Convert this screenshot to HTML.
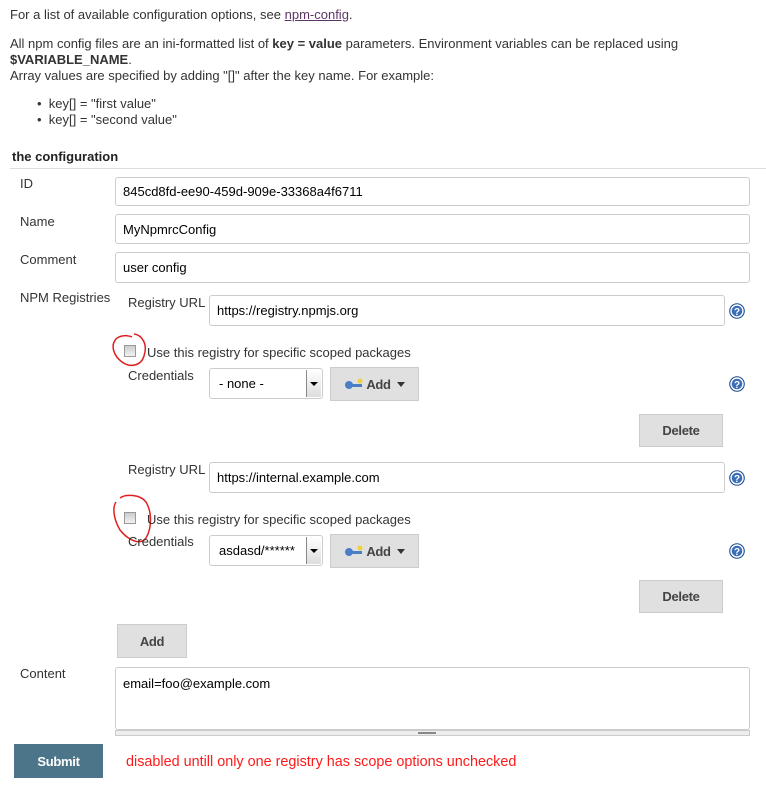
<!DOCTYPE html>
<html><head><style>
body{margin:0;width:766px;height:788px;background:#fff;font-family:"Liberation Sans",Arial,sans-serif;font-size:13px;color:#333;position:relative;overflow:hidden}
.a{position:absolute;white-space:nowrap}
.in{position:absolute;border:1px solid #ccc;border-radius:3px;background:#fff;box-sizing:border-box;padding-left:7px;font-size:13px;color:#000;display:flex;align-items:center}
.btn{position:absolute;background:#e0e0e0;border:1px solid #ccc;box-sizing:border-box;font-weight:bold;color:#444;display:flex;align-items:center;justify-content:center;font-size:13px;letter-spacing:-0.3px}
.cb{position:absolute;width:12px;height:12px;border:1px solid #999;background:linear-gradient(#ccc,#f2f2f2);box-sizing:border-box}
.help{position:absolute;width:16px;height:16px}
.sel{position:absolute;border:1px solid #ccc;border-radius:3px;box-sizing:border-box;background:#fff}
</style></head><body>
<div class="a" style="left:10px;top:7px">For a list of available configuration options, see <span style="color:#5c3566;text-decoration:underline">npm-config</span>.</div>
<div class="a" style="left:10px;top:36px">All npm config files are an ini-formatted list of <b>key = value</b> parameters. Environment variables can be replaced using</div>
<div class="a" style="left:10px;top:52px"><b>$VARIABLE_NAME</b>.</div>
<div class="a" style="left:10px;top:68px">Array values are specified by adding "[]" after the key name. For example:</div>
<div class="a" style="left:37px;top:96px">•&nbsp; key[] = "first value"</div>
<div class="a" style="left:37px;top:112px">•&nbsp; key[] = "second value"</div>
<div class="a" style="left:12px;top:149px;font-weight:bold;color:#222">the configuration</div>
<div class="a" style="left:10px;top:168px;width:756px;height:1px;background:#ddd"></div>

<div class="a" style="left:20px;top:176px">ID</div>
<div class="in" style="left:115px;top:177px;width:635px;height:29px">845cd8fd-ee90-459d-909e-33368a4f6711</div>
<div class="a" style="left:20px;top:214px">Name</div>
<div class="in" style="left:115px;top:214px;width:635px;height:30px">MyNpmrcConfig</div>
<div class="a" style="left:20px;top:252px">Comment</div>
<div class="in" style="left:115px;top:252px;width:635px;height:31px">user config</div>
<div class="a" style="left:20px;top:290px">NPM Registries</div>

<div class="a" style="left:128px;top:295px">Registry URL</div>
<div class="in" style="left:209px;top:295px;width:516px;height:31px">https://registry.npmjs.org</div>
<svg class="help" style="left:729px;top:303px" viewBox="0 0 16 16"><circle cx="8" cy="8" r="7.8" fill="#1f4c8f"/><circle cx="8" cy="8" r="6" fill="#3a6eb8" stroke="#fff" stroke-width="1.4"/><text x="8" y="12" font-size="10" font-weight="bold" fill="#fff" text-anchor="middle" font-family="Liberation Sans">?</text></svg>
<div class="cb" style="left:124px;top:345px"></div>
<svg class="a" style="left:108px;top:330px" width="42" height="42"><path d="M26 4 C34 5 40 14 36 26 C33 36 22 38 14 32 C6 26 2 16 8 9 C12 5 20 5 24 7" fill="none" stroke="#e02020" stroke-width="1.5"/></svg>
<div class="a" style="left:147px;top:345px">Use this registry for specific scoped packages</div>
<div class="a" style="left:128px;top:368px">Credentials</div>
<div class="sel" style="left:209px;top:368px;width:114px;height:31px"><span class="a" style="left:9px;top:7px;color:#000">- none -</span><div class="a" style="right:1px;top:1px;width:14px;height:27px;border-left:1px solid #888;background:linear-gradient(#fff,#ddd)"><div class="a" style="left:3px;top:12px;border:4px solid transparent;border-top:4px solid #000"></div></div></div>
<div class="btn" style="left:330px;top:367px;width:89px;height:34px"><svg width="20" height="12" viewBox="0 0 20 12"><circle cx="5" cy="7" r="4" fill="#4a7fc8"/><rect x="6" y="6" width="12" height="3" fill="#4a7fc8"/><circle cx="16" cy="3" r="2.5" fill="#f0d040"/></svg><span style="margin-left:2px">Add</span><span style="margin-left:6px;border:4px solid transparent;border-top:5px solid #333;margin-top:5px"></span></div>
<svg class="help" style="left:729px;top:376px" viewBox="0 0 16 16"><circle cx="8" cy="8" r="7.8" fill="#1f4c8f"/><circle cx="8" cy="8" r="6" fill="#3a6eb8" stroke="#fff" stroke-width="1.4"/><text x="8" y="12" font-size="10" font-weight="bold" fill="#fff" text-anchor="middle" font-family="Liberation Sans">?</text></svg>
<div class="btn" style="left:639px;top:414px;width:84px;height:33px">Delete</div>

<div class="a" style="left:128px;top:462px">Registry URL</div>
<div class="in" style="left:209px;top:462px;width:516px;height:31px">https://internal.example.com</div>
<svg class="help" style="left:729px;top:470px" viewBox="0 0 16 16"><circle cx="8" cy="8" r="7.8" fill="#1f4c8f"/><circle cx="8" cy="8" r="6" fill="#3a6eb8" stroke="#fff" stroke-width="1.4"/><text x="8" y="12" font-size="10" font-weight="bold" fill="#fff" text-anchor="middle" font-family="Liberation Sans">?</text></svg>
<div class="cb" style="left:124px;top:512px"></div>
<svg class="a" style="left:110px;top:492px" width="44" height="56"><path d="M10 6 C16 2 30 2 36 10 C42 20 42 36 36 46 C30 54 18 48 10 38 C4 28 2 16 6 10" fill="none" stroke="#e02020" stroke-width="1.5"/></svg>
<div class="a" style="left:147px;top:512px">Use this registry for specific scoped packages</div>
<div class="a" style="left:128px;top:534px">Credentials</div>
<div class="sel" style="left:209px;top:535px;width:114px;height:31px"><span class="a" style="left:9px;top:7px;color:#000">asdasd/******</span><div class="a" style="right:1px;top:1px;width:14px;height:27px;border-left:1px solid #888;background:linear-gradient(#fff,#ddd)"><div class="a" style="left:3px;top:12px;border:4px solid transparent;border-top:4px solid #000"></div></div></div>
<div class="btn" style="left:330px;top:534px;width:89px;height:34px"><svg width="20" height="12" viewBox="0 0 20 12"><circle cx="5" cy="7" r="4" fill="#4a7fc8"/><rect x="6" y="6" width="12" height="3" fill="#4a7fc8"/><circle cx="16" cy="3" r="2.5" fill="#f0d040"/></svg><span style="margin-left:2px">Add</span><span style="margin-left:6px;border:4px solid transparent;border-top:5px solid #333;margin-top:5px"></span></div>
<svg class="help" style="left:729px;top:543px" viewBox="0 0 16 16"><circle cx="8" cy="8" r="7.8" fill="#1f4c8f"/><circle cx="8" cy="8" r="6" fill="#3a6eb8" stroke="#fff" stroke-width="1.4"/><text x="8" y="12" font-size="10" font-weight="bold" fill="#fff" text-anchor="middle" font-family="Liberation Sans">?</text></svg>
<div class="btn" style="left:639px;top:580px;width:84px;height:33px">Delete</div>

<div class="btn" style="left:117px;top:624px;width:70px;height:34px">Add</div>

<div class="a" style="left:20px;top:666px">Content</div>
<div class="a" style="left:115px;top:667px;width:635px;height:63px;border:1px solid #ccc;border-radius:3px;box-sizing:border-box;padding:8px 7px;color:#000">email=foo@example.com</div>
<div class="a" style="left:115px;top:730px;width:635px;height:6px;border:1px solid #ccc;box-sizing:border-box;background:#eee"><div class="a" style="left:302px;top:1px;width:18px;height:2px;border-top:1px solid #888;border-bottom:1px solid #888;box-sizing:border-box"></div></div>

<div class="btn" style="left:14px;top:744px;width:89px;height:34px;background:#4d7589;border-color:#4d7589;color:#fff">Submit</div>
<div class="a" style="left:126px;top:754px;color:#ff1a1a;font-size:14.4px">disabled untill only one registry has scope options unchecked</div>
</body></html>
